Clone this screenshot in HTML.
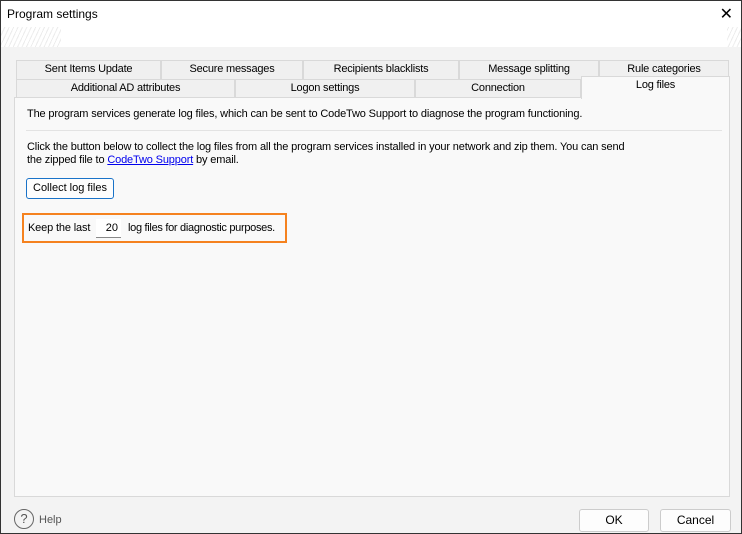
<!DOCTYPE html>
<html><head><style>
*{box-sizing:border-box}
body{margin:0;width:742px;height:534px;font-family:"Liberation Sans",sans-serif;font-size:11px;color:#000;overflow:hidden}
.win{position:absolute;left:0;top:0;width:742px;height:534px;border:1px solid #333;background:#f3f3f3}
.title{position:absolute;left:0;top:0;width:740px;height:26px;background:#fff;font-size:12px;padding:6px 0 0 6px}
.x{position:absolute;right:8px;top:3px;font-size:16px}
.banner{position:absolute;left:0;top:26px;width:740px;height:20px;background:repeating-linear-gradient(115deg,#fff 0 3px,#ececec 3px 4px);}
.banner:after{content:"";position:absolute;left:60px;top:0;right:14px;bottom:0;background:#fff}
.tab{position:absolute;height:19px;border:1px solid #d9d9d9;border-bottom:none;background:#f0f0f0;text-align:center;line-height:17px;font-size:11px;letter-spacing:-0.2px}
.panel{position:absolute;left:13px;top:96px;width:716px;height:400px;background:#f9f9f9;border:1px solid #d9d9d9}
.t{position:absolute;left:26px;white-space:nowrap;letter-spacing:-0.15px}
a{color:#0000ee;text-decoration:underline}
.btn{position:absolute;background:#fdfdfd;border:1px solid #ccc;border-radius:3px;text-align:center;font-size:12px}
</style></head><body><div class="win">
<div class="title">Program settings<span class="x">✕</span></div>
<div class="banner"></div>
<div class="tab" style="left:15px;top:59px;width:145px">Sent Items Update</div>
<div class="tab" style="left:160px;top:59px;width:142px">Secure messages</div>
<div class="tab" style="left:302px;top:59px;width:156px">Recipients blacklists</div>
<div class="tab" style="left:458px;top:59px;width:140px">Message splitting</div>
<div class="tab" style="left:598px;top:59px;width:130px">Rule categories</div>
<div class="tab" style="left:15px;top:78px;width:219px">Additional AD attributes</div>
<div class="tab" style="left:234px;top:78px;width:180px">Logon settings</div>
<div class="tab" style="left:414px;top:78px;width:166px">Connection</div>
<div class="panel"></div>
<div class="tab" style="left:580px;top:75px;width:149px;height:23px;background:#f9f9f9;z-index:2">Log files</div>
<div class="t" style="top:107px">The program services generate log files, which can be sent to CodeTwo Support to diagnose the program functioning.</div>
<div style="position:absolute;left:25px;top:129px;width:696px;border-top:1px solid #e3e3e3"></div>
<div class="t" style="top:140px">Click the button below to collect the log files from all the program services installed in your network and zip them. You can send</div>
<div class="t" style="top:153px">the zipped file to <a>CodeTwo Support</a> by email.</div>
<div class="btn" style="left:25px;top:177px;width:88px;height:21px;border-color:#1a73c8;line-height:19px;font-size:11px">Collect log files</div>
<div style="position:absolute;left:21px;top:212px;width:265px;height:30px;border:2px solid #f5821f"></div>
<div class="t" style="left:27px;top:221px">Keep the last</div>
<div style="position:absolute;left:95px;top:218px;width:25px;height:19px;background:#fff;border-bottom:1px solid #888;text-align:right;padding:3px 3px 0 0">20</div>
<div class="t" style="left:127px;top:221px;letter-spacing:-0.3px">log files for diagnostic purposes.</div>
<div style="position:absolute;left:13px;top:508px;width:20px;height:20px;border:1.5px solid #666;border-radius:50%;text-align:center;line-height:17px;font-size:13px;color:#555">?</div>
<div style="position:absolute;left:38px;top:513px;color:#555">Help</div>
<div class="btn" style="left:578px;top:508px;width:70px;height:23px;line-height:21px">OK</div>
<div class="btn" style="left:659px;top:508px;width:71px;height:23px;line-height:21px">Cancel</div>
</div></body></html>
